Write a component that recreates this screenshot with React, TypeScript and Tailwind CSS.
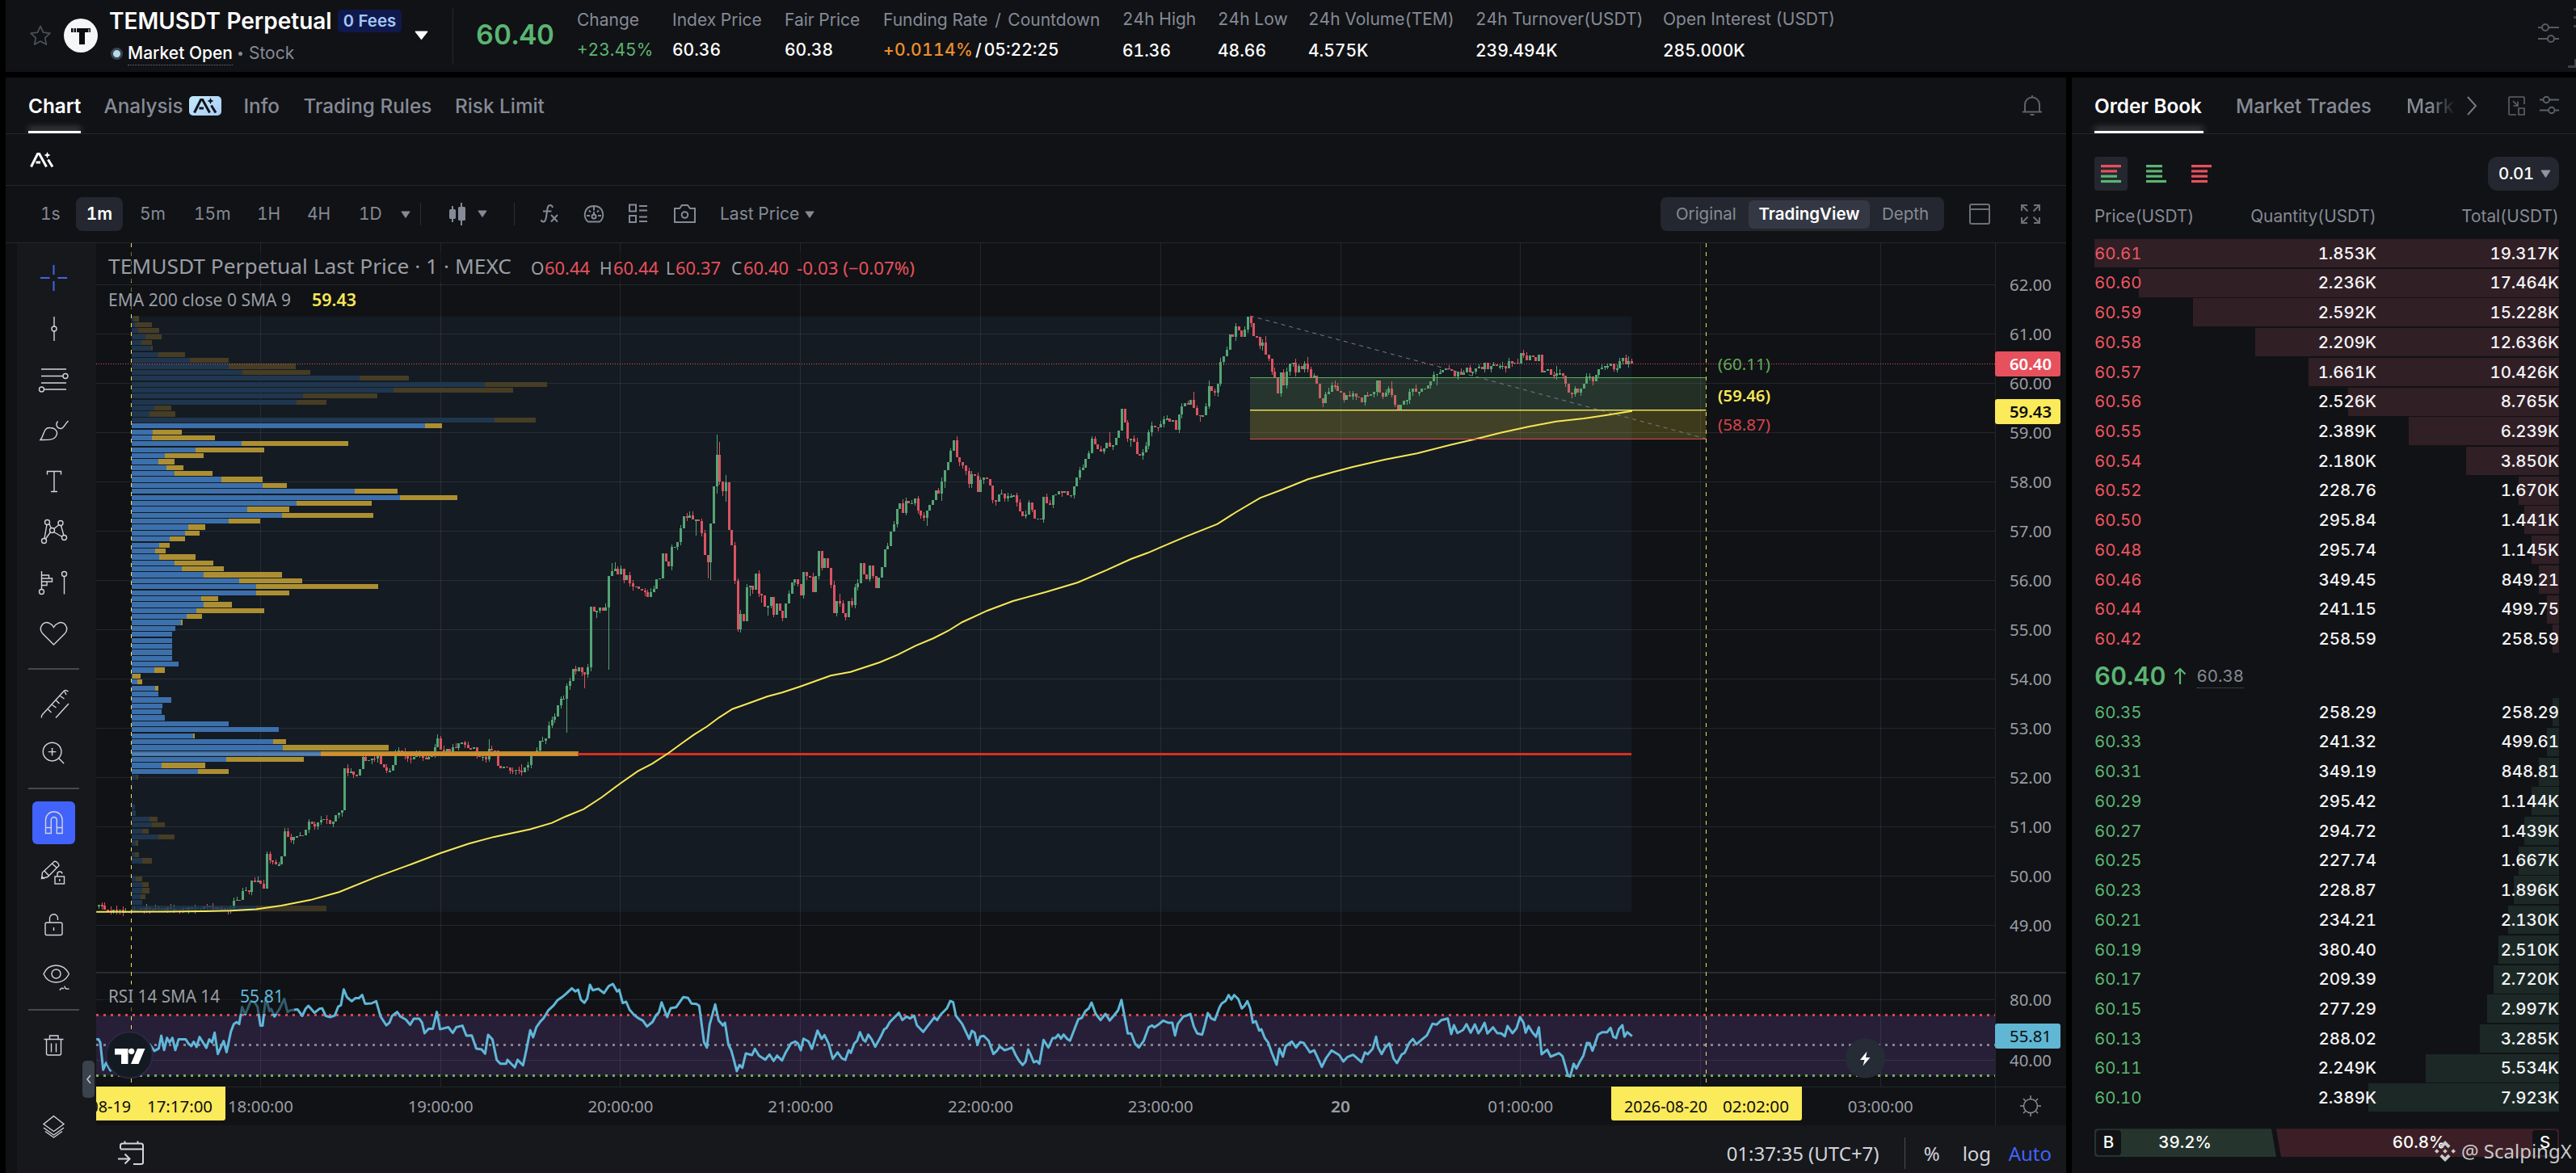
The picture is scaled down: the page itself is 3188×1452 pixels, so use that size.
import type { ReactNode } from 'react';
import { ZoomIn } from 'lucide-react';
import clsx from 'clsx';

// ── Chart geometry ────────────────────────────────────────────────────────

const X0 = 322.4;        // 18:00
const MINUTE = 3.7128;
const HOUR = MINUTE * 60;
const PANE_LEFT = 119;
const PANE_RIGHT = 2469;

type Pt = [number, number];

const priceY = (p: number) => 352.5 + (62 - p) * 61;

// Traces are stored on a finer grid than the canvas, scale them back down
function trace(ox: number, oy: number, sx: number, sy: number, raw: string): Pt[] {
  return raw.trim().split(/\s+/).map(s => {
    const [x, y] = s.split(',').map(Number);
    return [ox + x / sx, oy + y / sy];
  });
}

const toPath = (pts: Pt[]) => 'M' + pts.map(p => `${p[0].toFixed(1)} ${p[1].toFixed(1)}`).join('L');

const PRICE: Pt[] = [
  ...trace(0, 860, 2.24, 2.649, `
    270,690 280,692 288,705 300,706 320,708 345,710 370,704 390,700 420,702 450,700 480,703 510,700 540,701 570,697
    600,698 612,704 640,703 648,676 664,673 672,643 688,647 695,610 712,610 720,620 728,635 737,633 740,523 747,543
    755,549 771,557 780,530 788,447 797,467 805,477 813,466 822,464 838,462 843,475 847,443 855,416 863,424 872,432
    880,418 895,407 903,410 911,424 935,421 938,388 945,378 954,242 962,250 967,258 975,252 986,264 995,243
    1004,204 1012,216 1020,214 1035,217 1040,210 1047,200 1055,228 1062,238 1070,250 1080,250 1087,230 1093,210
    1100,190 1110,188 1125,200 1137,213 1145,205 1155,193 1165,190 1180,213 1190,205 1200,198 1206,172 1213,142
    1222,180 1235,178 1245,185 1256,172 1265,175 1275,160 1290,164 1300,176 1312,172 1320,198 1330,205 1345,212
    1355,178 1370,184 1378,234 1390,242 1405,238 1415,248 1430,246 1445,255 1460,262 1465,230 1472,186 1487,182
    1495,152 1510,142 1520,100 1535,72 1545,35 1553,14 1562,12`),
  ...trace(700, 560, 2.24, 3, `
    1,868 10,850 19,804 27,812 35,798 43,815 53,824 60,798 69,574 77,592 85,588 93,577 103,587 110,577 117,460
    127,441 135,432 143,452 151,433 160,475 168,457 177,487 185,499 194,497 202,508 210,514 219,520 227,536 236,519
    243,508 252,472 261,467 268,376 277,404 286,422 293,352 302,350 310,334 318,283 327,238 335,242 343,234 351,250
    360,250 368,254 376,301 384,381 393,407 402,263 409,127 418,10 427,108 434,144 443,112 451,287 460,344 468,478
    476,656 485,600 492,628 500,501 509,496 518,510 526,451 535,525 543,530 551,572 559,570 568,538 577,602 585,560
    593,587 602,614 609,562 617,526 626,484 635,472 643,488 651,530 660,444 668,460 676,462 685,518 693,460 701,367
    709,428 718,394 727,428 735,493 743,597 751,552 759,560 768,597 777,611 784,553 792,568 800,502 810,485 817,411
    826,454 835,470 843,421 851,460 860,503 868,466 876,427 884,360 893,348 900,295 909,268 918,211 926,189 934,224
    942,180 951,190 959,188 967,171 975,216 984,235 992,244 1000,216 1009,196 1017,178 1025,142 1033,152 1042,108
    1050,66 1058,37 1067,-5 1075,-45 1083,18 1092,37 1099,48 1108,70 1117,118 1126,80 1134,86 1142,146 1151,102
    1159,94 1167,100 1175,122 1184,178 1192,184 1200,156 1208,152 1217,170 1225,163 1233,163 1242,160 1249,187
    1258,220 1268,236 1275,230 1283,187 1292,212 1301,245 1309,245 1317,250 1326,165 1334,190 1342,194 1350,160
    1358,155 1366,143 1375,151 1383,143 1391,158 1400,158 1408,127 1416,92 1424,66`),
  ...trace(1300, 360, 1.742, 3, `
    70,656 75,625 81,603 89,550 96,570 103,587 108,597 115,585 122,565 128,580 135,572 141,545 148,520 154,439
    160,490 167,550 173,550 180,560 186,606 195,613 205,576 212,526 217,500 225,506 232,508 238,495 243,476 250,475
    258,485 265,480 270,516 278,458 284,430 290,418 297,422 304,406 308,436 315,461 322,464 330,462 334,428 341,354
    347,372 354,378 360,344 367,265 374,244 380,220 387,163 393,172 399,132 405,146 412,172 418,143 425,97 432,120
    438,168 445,172 451,203 458,192 464,238 470,252 477,300 484,324 490,380 496,304 503,352 510,300 516,270 522,266
    530,302 536,278 541,290 548,270 555,292 561,320 568,316 574,345 580,398 587,418 594,384 600,374 606,352 613,355
    620,371 627,378 633,404 640,388 646,392 652,381 658,392 664,395 670,413 677,388 683,390 690,383 696,376 703,334
    709,378 715,394 722,378 729,364 735,386 741,424 748,440 755,422 762,408 768,405 775,376 781,362 788,376 795,376
    802,364 808,362 815,350 821,336 828,313 835,308 842,304 848,294 855,292 862,296 869,318 877,300 884,312 890,304
    897,286 905,302 911,300 918,288 924,282 930,292 937,268 943,290 950,278 956,274 962,280 969,280 976,278 983,288
    990,262 997,270 1006,270 1013,232 1020,240 1026,258 1033,240 1040,246 1047,260 1053,236 1058,302 1065,298
    1072,292 1078,312 1085,314 1092,306 1098,306 1105,316 1111,344 1117,378 1124,384 1130,362 1137,378 1143,362
    1150,346 1156,318 1163,318 1170,336 1176,312 1182,290 1188,284 1195,280 1202,280 1209,270 1215,290 1222,288
    1229,262 1235,250 1240,274 1247,262 1253,271`),
];

// Wicks that stand out from the noise
const LONG_WICKS: Pt[] = [
  ...trace(700, 560, 2.24, 3, `
    1,1040 53,875 117,806 127,411 135,408 360,308 393,467 402,475 443,84 434,161 443,183 559,605 543,558 759,525
    1000,272 1042,180 777,623 1050,133 85,614 509,533 418,152 418,-66 427,-40`),
  ...trace(1300, 360, 1.742, 3, `
    125,526 308,375 322,486 555,246 735,336 464,168 458,222 341,334 172,578 613,334 832,352 983,302 1098,290
    1130,392 1092,278 1247,243 354,380 976,264`),
  ...trace(0, 860, 2.24, 2.649, '1355,146 1445,228 888,397 1100,183 1287,152 747,514'),
];

interface Candle { x: number; open: number; close: number; hi: number; lo: number }

function buildCandles(): Candle[] {
  const closes = new Map<number, number>();
  const idx = (x: number) => Math.round((x - X0) / MINUTE);
  PRICE.forEach(([x, y]) => closes.set(idx(x), y));
  const keys = [...closes.keys()].sort((a, b) => a - b);
  for (let k = 1; k < keys.length; k++) {
    const [a, b] = [keys[k - 1], keys[k]];
    for (let i = a + 1; i < b; i++) {
      const t = (i - a) / (b - a);
      const wobble = Math.sin(i * 2.7) * 2;
      closes.set(i, closes.get(a)! * (1 - t) + closes.get(b)! * t + wobble);
    }
  }
  const last = keys[keys.length - 1];
  const out: Candle[] = [];
  let open = closes.get(keys[0])!;
  for (let i = keys[0]; i <= last; i++) {
    const close = closes.get(i)!;
    const up = (Math.abs(Math.sin(i * 12.9898)) * 4371) % 1;
    const down = (Math.abs(Math.sin(i * 78.233)) * 4371) % 1;
    out.push({
      x: X0 + i * MINUTE,
      open,
      close,
      hi: Math.min(open, close) - (up > 0.6 ? up * 5 : 0),
      lo: Math.max(open, close) + (down > 0.6 ? down * 5 : 0),
    });
    open = close;
  }
  LONG_WICKS.forEach(([x, y]) => {
    const c = out[idx(x) - keys[0]];
    if (!c) return;
    c.hi = Math.min(c.hi, y);
    c.lo = Math.max(c.lo, y);
  });
  return out;
}

const CANDLES = buildCandles();

const EMA: Pt[] = [
  ...trace(0, 860, 2.24, 2.649, `
    267,712 465,711 560,710 640,708 710,703 780,691 860,673 940,647 1040,599 1130,560 1220,520 1300,488 1370,466
    1470,441 1530,420`),
  ...trace(700, 560, 2.24, 3, `
    0,1352 50,1325 100,1281 151,1230 200,1184 240,1156 285,1117 320,1082 355,1049 392,1018 425,985 462,953 500,935
    560,906 600,892 651,869 735,829 790,815 870,780 920,752 970,718 1020,690 1060,663 1100,630 1170,587 1240,552
    1330,519 1420,483 1500,437 1567,396`),
  ...trace(1300, 360, 1.742, 3, `
    210,973 238,952 290,914 360,866 400,822 452,769 500,738 555,700 610,673 650,655 720,627 790,604 860,573 920,549
    970,527 1030,505 1090,485 1150,474 1200,461 1254,446`),
];

const RSI: Pt[] = [
  ...trace(0, 860, 2.24, 2.649, `
    267,1130 273,1130 278,1140 286,1230 294,1207 306,1232 330,1190 370,1160 400,1150 415,1147 428,1168 440,1160
    447,1118 455,1165 463,1125 470,1140 478,1125 486,1165 495,1130 515,1130 523,1145 530,1152 537,1138 545,1155
    553,1122 560,1135 572,1158 580,1130 588,1140 595,1108 604,1178 620,1135 628,1172 640,1105 648,1080 656,1073
    663,1080 671,1024 680,1048 695,1005 705,1008 714,1023 722,1085 728,1085 737,992 747,1037 752,1030 761,1055
    775,1030 788,997 797,1040 805,1035 815,1033 825,1032 838,1053 847,1030 855,1020 872,1043 885,1030 893,1028
    903,1053 915,1057 928,1052 938,1022 945,1018 953,966 962,992 975,1005 985,995 995,995 1004,984 1012,1013
    1030,1012 1043,1005 1055,1055 1071,1084 1080,1075 1087,1053 1101,1040 1110,1055 1125,1065 1137,1082 1147,1062
    1162,1062 1170,1075 1177,1110 1188,1095 1200,1095 1211,1040 1220,1097 1243,1090 1255,1109 1265,1090 1282,1085
    1293,1118 1308,1117 1320,1160 1335,1163 1345,1177 1353,1115 1365,1130 1377,1197 1387,1210 1403,1210 1407,1197
    1417,1210 1427,1222 1435,1197 1450,1215 1460,1160 1470,1100 1478,1123 1487,1090 1497,1073 1507,1060 1520,1035
    1535,1018 1545,1002 1560,990`),
  ...trace(700, 1180, 1.1615, 3, `
    0,152 9,130 14,142 18,135 22,172 27,184 31,168 35,117 39,137 47,132 55,148 62,122 68,114 74,142 77,135 82,185
    87,180 92,210 98,228 105,242 111,250 117,272 125,255 130,230 134,220 138,182 146,237 151,204 159,200 169,163
    176,166 181,187 188,188 192,195 199,330 203,350 207,265 215,190 220,250 226,268 229,258 234,340 238,360 242,398
    246,438 250,415 254,425 259,372 268,378 272,355 278,380 287,395 293,376 299,400 304,380 311,398 316,370 324,335
    330,328 334,335 338,360 342,317 349,327 354,355 362,287 368,318 372,304 378,335 384,392 391,368 397,390 402,396
    407,360 410,370 415,335 419,325 423,293 428,322 431,328 435,302 440,320 445,347 453,310 458,282 461,278 466,256
    474,235 479,221 484,248 490,235 495,242 501,232 505,268 514,292 522,265 530,238 534,248 539,228 548,205 553,177
    557,182 561,232 570,262 576,295 580,318 584,288 588,295 592,340 596,310 601,307 608,325 615,374 620,362 624,346
    631,360 637,355 642,350 647,378 652,400 657,415 661,403 665,357 669,380 673,405 677,400 681,410 687,322 694,350
    700,315 704,315 708,302 712,317 716,302 721,318 725,325 732,278 737,245 742,240 747,215 752,205 756,183 762,225
    769,248 776,225 782,250 788,232 794,212 799,173 808,298 813,298 819,338 824,350 831,325 838,275 843,268 846,275
    853,263 859,250 866,258 872,258 876,305 880,262 888,235 894,230 898,225 903,272 908,298 915,302 919,265 923,222
    928,242 933,248 940,200 943,187 949,176 953,155 957,172 961,155 967,170 972,205 976,195 980,178 984,205 988,258
    992,252 997,287 1000,282 1005,315 1010,332 1015,370 1022,414 1026,354 1031,384 1035,345 1044,328 1050,350
    1056,330 1061,333 1070,368 1076,360 1081,388 1087,422 1093,390 1101,361 1112,378 1118,402 1124,385 1132,377
    1144,404 1149,368 1153,375 1160,355 1165,310 1168,350 1173,374 1178,350 1184,335 1190,390 1195,408 1202,375
    1206,370 1213,332 1218,318 1223,338 1230,322 1238,305 1246,262 1252,265 1259,248 1268,242 1273,300 1277,267
    1282,296 1290,285 1295,263 1301,295 1307,264 1312,297 1316,283 1321,258 1325,298 1333,275 1339,296 1345,298
    1350,308 1354,270 1361,297 1367,278 1372,237 1377,258 1380,295 1384,270 1390,295 1395,310 1399,275 1403,375
    1411,358 1416,384 1428,371 1433,382 1437,418 1441,455 1444,458 1449,410 1453,428 1458,402 1463,380 1468,333
    1472,334 1476,362 1484,302 1490,293 1497,293 1502,277 1506,310 1510,315 1514,282 1519,267 1522,310 1526,293
    1533,308`),
];

// Volume profile: [up volume, total volume] per price row, top to bottom
const PROFILE: Pt[] = `
  7,22 9,56 18,78 40,85 29,58 54,60 76,150 163,271 269,455 307,497 632,770 981,1153 726,1059 475,681 459,540 63,110
  51,123 1006,1120 815,862 60,139 56,231 305,602 179,369 92,201 76,119 98,145 119,226 249,365 363,432 620,737 744,903
  459,667 322,439 417,670 269,358 159,204 148,190 107,148 78,107 65,96 78,179 119,228 141,257 201,417 298,473
  347,685 347,437 193,240 201,278 181,369 154,197 137,143 123,123 114,114 114,114 114,114 114,114 114,114 130,130
  63,92 4,25 16,31 67,76 74,74 110,110 87,87 85,85 92,92 269,269 408,408 172,175 392,428 421,714 526,1239 264,479
  83,206 184,269 15,20 3,3 3,3 2,2 3,3 10,10 13,13 51,72 58,94 31,49 74,119 13,20 2,2 9,22 31,56 2,2 1,1 13,31 31,49
  31,51 25,40 31,31 347,542`
  .trim().split(/\s+/).map(s => s.split(',').map(n => Number(n) / 2.24) as Pt);

const ROW = 7.374;

interface LabelProps {
  x: number;
  y: number;
  w?: number;
  size?: number;
  fill?: string;
  bold?: boolean;
  anchor?: 'start' | 'middle' | 'end';
  children: ReactNode;
}

function Label({ x, y, w, size = 20, fill = '#9a9da5', bold, anchor = 'start', children }: LabelProps) {
  return (
    <text
      x={x}
      y={y + size * 0.357}
      fontSize={size}
      fill={fill}
      fontWeight={bold ? 600 : 400}
      textAnchor={anchor}
      textLength={w}
      lengthAdjust="spacingAndGlyphs"
    >
      {children}
    </text>
  );
}

function Chart() {
  const hours = Array.from({ length: 10 }, (_, i) => X0 + i * HOUR);
  const prices = Array.from({ length: 14 }, (_, i) => 62 - i);
  const times = ['18:00:00', '19:00:00', '20:00:00', '21:00:00', '22:00:00', '23:00:00', '20', '01:00:00', '', '03:00:00'];

  return (
    <svg width={2438} height={1092} viewBox="119 301 2438 1092" className="block font-['Noto_Sans',sans-serif]">
      <rect x={162.5} y={391.4} width={1857} height={737.4} fill="#151b22" />
      <rect x={PANE_LEFT} y={1256.5} width={2350} height={75} fill="#271f37" />

      {/* Grid */}
      <g stroke="#96a0be" strokeOpacity={0.14} strokeWidth={1} shapeRendering="crispEdges">
        {prices.map(p => <line key={p} x1={PANE_LEFT} x2={PANE_RIGHT} y1={priceY(p)} y2={priceY(p)} />)}
        {hours.map(x => <line key={x} x1={x} x2={x} y1={301} y2={1345} />)}
        <line x1={PANE_LEFT} x2={PANE_RIGHT} y1={1237.5} y2={1237.5} />
        <line x1={PANE_LEFT} x2={PANE_RIGHT} y1={1312.5} y2={1312.5} />
        <line x1={PANE_RIGHT + 0.5} x2={PANE_RIGHT + 0.5} y1={301} y2={1393} />
        <line x1={PANE_LEFT} x2={2557} y1={1345.5} y2={1345.5} />
      </g>
      <rect x={PANE_LEFT} y={1203} width={2438} height={2} fill="#292b32" />

      {/* Candles */}
      <g shapeRendering="crispEdges">
        {CANDLES.map((c, i) => (
          <g key={i} fill={c.close <= c.open ? '#53a574' : '#db5363'}>
            <rect x={Math.round(c.x)} y={c.hi} width={1} height={c.lo - c.hi} />
            <rect x={Math.round(c.x) - 1} y={Math.min(c.open, c.close)} width={3} height={Math.max(1.5, Math.abs(c.close - c.open))} />
          </g>
        ))}
      </g>

      {/* Volume profile */}
      <g shapeRendering="crispEdges">
        {PROFILE.map(([up, total], i) => {
          const inArea = i >= 18 && i <= 76;
          const y = 391.4 + i * ROW;
          return (
            <g key={i} opacity={i > 98 ? 0.8 : 1}>
              <rect x={162.5} y={y} width={up} height={6.2} fill={inArea ? '#3c70ac' : '#1f364e'} />
              <rect x={162.5 + up} y={y} width={total - up} height={6.2} fill={inArea ? '#ad8f33' : '#463d25'} />
            </g>
          );
        })}
        <rect x={715} y={932} width={1304} height={3} fill="#d8301f" />
        <rect x={397} y={932} width={318} height={3} fill="#df8a2d" />
        <rect x={162.5} y={932} width={234} height={3} fill="#5a80a8" />
      </g>

      <path d={toPath(EMA)} fill="none" stroke="#f7e857" strokeWidth={2} />

      {/* Fib zones */}
      <rect x={1547} y={467} width={564.5} height={40} fill="#6fa563" fillOpacity={0.2} />
      <rect x={1547} y={507} width={564.5} height={36} fill="#f1dc3c" fillOpacity={0.2} />
      <line x1={1547} y1={391} x2={2111} y2={543} stroke="#787b86" strokeWidth={1} strokeDasharray="5 5" />
      <rect x={1547} y={467} width={564.5} height={1} fill="#58b056" />
      <rect x={1547} y={507} width={564.5} height={1.4} fill="#f7e857" />
      <rect x={1547} y={543} width={564.5} height={1} fill="#d9484f" />
      <Label x={2126} y={450.5} w={65} fill="#5eac5b">(60.11)</Label>
      <Label x={2126} y={490} w={65} fill="#f7e857" bold>(59.46)</Label>
      <Label x={2126} y={526} w={65} fill="#d8444c">(58.87)</Label>

      <line x1={PANE_LEFT} x2={PANE_RIGHT} y1={450.5} y2={450.5} stroke="#e6515d" strokeDasharray="1 2" />

      {/* RSI */}
      <g strokeWidth={3} strokeDasharray="3 6">
        <line x1={119} x2={2469} y1={1256.5} y2={1256.5} stroke="#d9484f" />
        <line x1={119} x2={2469} y1={1293.5} y2={1293.5} stroke="#84828c" />
        <line x1={119} x2={2469} y1={1331.5} y2={1331.5} stroke="#6cb05a" />
      </g>
      <path d={toPath(RSI)} fill="none" stroke="#5fb7d8" strokeWidth={3} strokeLinejoin="round" />

      {/* Range anchors */}
      <g stroke="#f1e25a" strokeWidth={1} strokeDasharray="5 6" shapeRendering="crispEdges">
        <line x1={162.5} x2={162.5} y1={301} y2={1345} />
        <line x1={2111.5} x2={2111.5} y1={301} y2={1345} />
      </g>

      {/* Legends */}
      <g fill="#111215" fillOpacity={0.55}>
        <rect x={127} y={311} width={1012} height={38} />
        <rect x={127} y={356} width={326} height={33} />
        <rect x={127} y={1218} width={237} height={37} />
      </g>
      <Label x={134} y={329.5} w={499} size={26}>TEMUSDT Perpetual Last Price · 1 · MEXC</Label>
      <Label x={657} y={333} size={21}>O</Label>
      <Label x={674} y={333} w={56} size={21} fill="#e6515d">60.44</Label>
      <Label x={742} y={333} size={21}>H</Label>
      <Label x={759} y={333} w={56} size={21} fill="#e6515d">60.44</Label>
      <Label x={824} y={333} size={21}>L</Label>
      <Label x={836} y={333} w={56} size={21} fill="#e6515d">60.37</Label>
      <Label x={905} y={333} size={21}>C</Label>
      <Label x={920} y={333} w={56} size={21} fill="#e6515d">60.40</Label>
      <Label x={986} y={333} w={146} size={21} fill="#e6515d">-0.03 (−0.07%)</Label>
      <Label x={134} y={372} w={226} size={21}>EMA 200 close 0 SMA 9</Label>
      <Label x={386} y={372} w={55} size={21} fill="#f7e857" bold>59.43</Label>
      <Label x={134} y={1234} w={138} size={21}>RSI 14 SMA 14</Label>
      <Label x={297} y={1234} w={54} size={21} fill="#5fb7d8">55.81</Label>

      {/* Price axis */}
      {prices.map(p => <Label key={p} x={2487} y={priceY(p)} w={52}>{p.toFixed(2)}</Label>)}
      <Label x={2487} y={1237.5} w={52}>80.00</Label>
      <Label x={2487} y={1312.5} w={52}>40.00</Label>
      <rect x={2469} y={435} width={81} height={31} rx={3} fill="#e6515d" />
      <Label x={2487} y={450.5} w={52} fill="#fff" bold>60.40</Label>
      <rect x={2469} y={494} width={81} height={31} rx={3} fill="#fbea5a" />
      <Label x={2487} y={509.5} w={52} fill="#0c0d10" bold>59.43</Label>
      <rect x={2469} y={1267} width={81} height={31} rx={3} fill="#5fb7d4" />
      <Label x={2487} y={1282.5} w={52} fill="#0c0d10">55.81</Label>

      {/* Time axis */}
      {times.map((t, i) => t && (
        <Label key={i} x={hours[i]} y={1370} w={t === '20' ? 24 : 81} anchor="middle" bold={t === '20'}>{t}</Label>
      ))}
      <path d="M119 1345h160v39a3 3 0 0 1-3 3H119z" fill="#fbea5a" />
      <Label x={59} y={1370} w={103} fill="#0c0d10">2026-08-19</Label>
      <Label x={182} y={1370} w={81} fill="#0c0d10">17:17:00</Label>
      <path d="M1994 1345h236v39a3 3 0 0 1-3 3h-230a3 3 0 0 1-3-3z" fill="#fbea5a" />
      <Label x={2010} y={1370} w={103} fill="#0c0d10">2026-08-20</Label>
      <Label x={2132} y={1370} w={82} fill="#0c0d10">02:02:00</Label>

      {/* Axis settings */}
      <g stroke="#8b8e96" strokeWidth={1.5} fill="none">
        <circle cx={2513} cy={1369} r={8.5} />
        <path d="M2513 1356v4M2513 1378v4M2500 1369h4M2522 1369h4M2504 1360l2.5 2.5M2519.5 1375.5l2.5 2.5M2504 1378l2.5-2.5M2519.5 1362.5l2.5-2.5" />
      </g>

      {/* TradingView mark */}
      <circle cx={160} cy={1306} r={28.5} fill="#141a21" stroke="#2d2a49" strokeWidth={1.5} />
      <g fill="#fff">
        <path d="M142 1298h16.500v19h-8.500v-11.500h-8z" />
        <circle cx={162.7} cy={1301.3} r={3.6} />
        <path d="M170 1298h9.500l-8 19h-9.500z" />
      </g>
      <circle cx={2308.5} cy={1310} r={24.5} fill="#262c36" />
      <path d="M2310.500 1301.500l-8.500 10.500h5.500l-2 7.500 9-10.500h-5.500z" fill="#fff" />
    </svg>
  );
}

// ── Icons ─────────────────────────────────────────────────────────────────

function Glyph({ children, size = 40, className }: { children: ReactNode; size?: number; className?: string }) {
  return (
    <svg
      width={size}
      height={size}
      viewBox={`0 0 ${size} ${size}`}
      fill="none"
      stroke="currentColor"
      strokeWidth={1.4}
      className={clsx('shrink-0', className)}
    >
      {children}
    </svg>
  );
}

function Caret({ className }: { className?: string }) {
  return (
    <svg width="14" height="10" viewBox="0 0 14 10" preserveAspectRatio="none" fill="currentColor" className={clsx('shrink-0', className)}>
      <path d="M1 1h12L7 9.500z" stroke="currentColor" strokeLinejoin="round" />
    </svg>
  );
}

function Sliders({ className }: { className?: string }) {
  return (
    <svg width="28" height="28" viewBox="0 0 28 28" fill="none" stroke="currentColor" strokeWidth="2" className={className}>
      <path d="M1 7h5M14 7h13M1 21h12M21 21h6" />
      <circle cx="10" cy="7" r="4" />
      <circle cx="17" cy="21" r="4" />
    </svg>
  );
}

function AiMark() {
  return (
    <svg width="30" height="20" viewBox="0 0 30 20" fill="none" stroke="currentColor" strokeWidth="3" className="shrink-0">
      <path d="M1.500 18.500L9.500 2.500h2.200L20.500 18.500M7.500 13h5.500M22.500 9.500l5.500 9" />
      <path d="M21.500 0l1.200 2.800 2.800 1.200-2.800 1.200L21.500 8l-1.200-2.800L17.500 4l2.800-1.200z" fill="currentColor" stroke="none" />
    </svg>
  );
}

const TOOLS_DRAW: ReactNode[] = [
  <g stroke="#3f66e8" strokeWidth={2}><path d="M20.500 4v12M20.500 24v12M4 20h11.500M25.500 20H37" /></g>,
  <><path d="M21 5v12M21 23v12" /><circle cx="21" cy="20" r="3" /></>,
  <><path d="M5 7h31M5 15.500h27M5 24h31M9 32h27" /><circle cx="35" cy="15.500" r="3" /><circle cx="5.500" cy="32" r="3" /></>,
  <path d="M4 31.500C9 26 7.500 16 15.500 16.500c7 0 11 5 8 10C21 32 14 31.500 4 31.500zM25.500 8.500C22 13 25 18 30 17.500 32.500 17 34 12.500 38.500 8" />,
  <path d="M12.500 11.500v-4h17v4M21 7.500v25M17 32.500h8" />,
  <>
    <path d="M12 11L9 28.500M15 10.500l2.500 5.500M21 16.500l6-5M29.500 12.500l3.500 12.500M20.500 20.500l10.500 6M16.500 20.500l-6 8.500" />
    <circle cx="12.500" cy="8.500" r="3" /><circle cx="29" cy="9.500" r="3" /><circle cx="8.500" cy="31.500" r="3" />
    <circle cx="33.500" cy="27.500" r="3" /><circle cx="18.500" cy="18.500" r="3" />
  </>,
  <>
    <path d="M5.500 6v22.500M5.500 11h9v4M5.500 15h13v4h-13M5.500 23.500h6.500V19M33.500 12.500v22" />
    <circle cx="5.500" cy="31.500" r="3" /><circle cx="33.500" cy="9.500" r="3" />
  </>,
  <path d="M20.500 34L7 20.500C0.500 13.500 7.500 4 14.500 7.200c3 1.300 5 3.300 6 5.300 1-2 3-4 6-5.300C33.500 4 40.500 13.500 34 20.500z" />,
];

const RULER = (
  <path d="M5.500 37.500c-.5-2 0-3 1-4L33 4.500c1.500-1.500 3-1.500 5.500.5M23 37.500L39 20M13.500 27l4 4M18.500 21.500l5 3.500M23.500 16l4 4M28.500 10.500l5 3.500M34 5l2 4" />
);
const MAGNET = <path d="M10.500 33.500V17a10.300 10.300 0 0 1 20.600 0v16.500h-6.800V17a3.500 3.500 0 0 0-7 0v16.500zM10.500 26.500h6.800M24.300 26.500h6.800" />;
const PENCIL_LOCK = (
  <>
    <path d="M5.500 27.500l1-7.500L21 6.500c2-1 6 2 6 5L13 25.500zM18.500 9l6 5.500M9 18l5.500 6M6 25l3 3" />
    <rect x="22" y="25" width="11.500" height="9" /><path d="M25 25v-2.500a3 3 0 0 1 6-1M27.800 28v3" />
  </>
);
const UNLOCK = <><rect x="10" y="19" width="21" height="15.500" rx="2" /><path d="M15.500 19v-5a5 5 0 0 1 10-.5V16M20.500 25v4" /></>;
const EYE = (
  <>
    <path d="M8 19.500C14 5.500 32.500 5.500 39.500 19.500 32.500 33.500 14 33.500 8 19.500z" /><circle cx="23.500" cy="19.500" r="5.500" />
    <path d="M28 40c1-3 3-3.500 5-2M34 34.500c0 3 1.500 4 5.500 3.500" />
  </>
);
const TRASH = <path d="M8.500 12.500h24M15.500 12.500V8h10.500v4.500M11.500 12.500v17.500q0 2 2 2h14q2 0 2-2V12.500M17.500 17.500v11M23.500 17.500v11" />;
const LAYERS = <path d="M20.500 6.500L33 16.500l-12.500 9L8 16.500zM8 21l12.500 9L33 21M10 25.500l10.500 7.500L31 25.500" />;

function Tool({ children }: { children: ReactNode }) {
  return <button className="flex h-[62.8px] shrink-0 items-center justify-center"><Glyph>{children}</Glyph></button>;
}

const Rule = () => <div className="h-0.5 w-[63px] shrink-0 bg-[#46484d]" />;

function DrawingBar() {
  return (
    <div className="flex h-full w-[98px] shrink-0 flex-col items-center bg-[#17181c] pr-2 pt-3 text-[#d1d4dc]">
      {TOOLS_DRAW.map((t, i) => <Tool key={i}>{t}</Tool>)}
      <div className="h-[11.5px] shrink-0" />
      <Rule />
      <div className="h-[11px] shrink-0" />
      <Tool>{RULER}</Tool>
      <button className="flex h-[59px] shrink-0 items-center justify-center"><ZoomIn size={34} strokeWidth={1} /></button>
      <div className="h-[13px] shrink-0" />
      <Rule />
      <button className="mt-[15px] flex h-[53px] w-[53px] shrink-0 items-center justify-center rounded-md bg-[#4163fb]">
        <Glyph>{MAGNET}</Glyph>
      </button>
      <div className="h-[4px] shrink-0" />
      <Tool>{PENCIL_LOCK}</Tool>
      <Tool>{UNLOCK}</Tool>
      <Tool>{EYE}</Tool>
      <div className="h-[12px] shrink-0" />
      <Rule />
      <div className="h-[12px] shrink-0" />
      <Tool>{TRASH}</Tool>
      <div className="h-[38px] shrink-0" />
      <Tool>{LAYERS}</Tool>
    </div>
  );
}

// ── Header ────────────────────────────────────────────────────────────────

function Stat({ label, className, children }: { label: ReactNode; className: string; children: ReactNode }) {
  return (
    <div className={clsx('shrink-0 whitespace-nowrap text-[21px] leading-[26px]', className)}>
      <div className="text-[#858a96]">{label}</div>
      <div className="font-medium text-white">{children}</div>
    </div>
  );
}

function Header() {
  return (
    <header className="relative ml-[7px] flex h-[89px] shrink-0 bg-[#111215]">
      <svg width="28" height="28" viewBox="0 0 24 24" fill="none" stroke="#4c5058" strokeWidth="1.500" strokeLinejoin="round" className="ml-[29px] mt-[30px] shrink-0">
        <path d="M12 2l3 6.600 7.200.9-5.300 4.900 1.400 7.100-6.300-3.500-6.300 3.500 1.400-7.100L1.800 9.500 9 8.600z" />
      </svg>
      <div className="ml-[15px] mt-[23px] flex size-[42px] shrink-0 items-center justify-center rounded-full bg-[#f5f6f8]">
        <svg width="24" height="22" viewBox="0 0 24 22" fill="#0b0c0e" className="mt-[2px]">
          <path d="M0 1h2.500v5H0zM3.500 1H6v5H3.500zM7 1h17v5h-1.500V2h-1v4H17v15h-7V6H7z" />
        </svg>
      </div>
      <div className="ml-[14px] flex w-[362px] shrink-0 flex-col">
        <div className="mt-[10px] flex h-[32px] items-center whitespace-nowrap">
          <span className="text-[28px] font-semibold text-white">TEMUSDT Perpetual</span>
          <span className="ml-[7px] flex h-[28px] items-center rounded-[5px] bg-[#10194d] px-[7px] text-[20.5px] font-semibold text-[#a3c8f5]">0 Fees</span>
        </div>
        <div className="mt-[9px] flex h-[30px] items-center whitespace-nowrap text-[21px]">
          <span className="ml-[2px] mr-[6px] size-[15px] rounded-full border-[3px] border-[#3a4750] bg-[#b9d9ea]" />
          <span className="border-b border-dotted border-[#6b7079] font-medium leading-[29px] text-white">Market Open</span>
          <span className="ml-[7px] size-[5px] rounded-full bg-[#858a96]" />
          <span className="ml-[8px] text-[#858a96]">Stock</span>
        </div>
      </div>
      <Caret className="ml-[16px] mt-[38px] h-[11px] w-[17px] text-white" />
      <div className="ml-[30px] mt-[9px] h-[70px] w-px shrink-0 bg-[#24272f]" />
      <div className="ml-[28px] mt-[22px] w-[125px] shrink-0 text-[34px] font-semibold leading-[42px] text-[#5ab573]">60.40</div>
      <Stat label="Change" className="mt-[12px] w-[118px] space-y-[11px]"><span className="font-normal text-[#5ab573]">+23.45%</span></Stat>
      <Stat label="Index Price" className="mt-[12px] w-[139px] space-y-[11px]">60.36</Stat>
      <Stat label="Fair Price" className="mt-[12px] w-[122px] space-y-[11px]">60.38</Stat>
      <Stat
        label={<>Funding Rate <span className="mx-[3px]">/</span> Countdown</>}
        className="mt-[12px] w-[296px] space-y-[11px]"
      >
        <span className="inline-block w-[114px] tracking-[0.4px] text-[#ec8f2e]">+0.0114%</span>/
        <span className="ml-[3px]">05:22:25</span>
      </Stat>
      <Stat label="24h High" className="mt-[11px] w-[118px] space-y-[13px]">61.36</Stat>
      <Stat label="24h Low" className="mt-[11px] w-[112px] space-y-[13px]">48.66</Stat>
      <Stat label="24h Volume(TEM)" className="mt-[11px] w-[207px] space-y-[13px]">4.575K</Stat>
      <Stat label="24h Turnover(USDT)" className="mt-[11px] w-[232px] space-y-[13px]">239.494K</Stat>
      <Stat label="Open Interest (USDT)" className="mt-[11px] w-[300px] space-y-[13px]">285.000K</Stat>
      <Sliders className="ml-auto mr-[20px] mt-[27px] shrink-0 text-[#565a63]" />
      {/* scroll stubs peeking in from the right edge */}
      <div className="absolute right-0 top-[10px] h-[3px] w-[3px] bg-[#3d4148]" />
      <div className="absolute right-0 top-[20px] h-[3px] w-[3px] bg-[#3d4148]" />
      <div className="absolute right-0 top-[31px] h-[3px] w-[3px] bg-[#3d4148]" />
      <div className="absolute right-0 top-[73px] h-[11px] w-[10px] border-b-[3px] border-r-[2px] border-[#3d4148]" />
    </header>
  );
}

// ── Chart panel ───────────────────────────────────────────────────────────

function Tab({ active, className, children }: { active?: boolean; className?: string; children: ReactNode }) {
  return (
    <div className={clsx('flex h-full shrink-0 flex-col whitespace-nowrap text-[24.3px]', className)}>
      <div className={clsx('flex flex-1 items-center pt-[4px]', active ? 'font-semibold text-white' : 'font-medium text-[#858a96]')}>
        {children}
      </div>
      <div className={clsx('h-[3px]', active && 'bg-white shadow-[0_-3px_8px_rgba(255,255,255,0.45)]')} />
    </div>
  );
}

function ChartPanel() {
  return (
    <section className="flex h-full w-[2550px] shrink-0 flex-col bg-[#111215]">
      <div className="flex h-[70px] shrink-0 overflow-hidden border-b border-[#24262c] pl-[28px]">
        <Tab active className="w-[93.5px] [&>div:last-child]:w-[65px]">Chart</Tab>
        <Tab className="w-[173px]">
          Analysis
          <span className="ml-[7px] flex h-[24px] w-[40px] items-center justify-center rounded-[5px] bg-linear-to-br from-[#c4e9fb] to-[#a9cdf8] text-[#111215]">
            <AiMark />
          </span>
        </Tab>
        <Tab className="w-[74px]">Info</Tab>
        <Tab className="w-[187.5px]">Trading Rules</Tab>
        <Tab>Risk Limit</Tab>
        <Glyph size={30} className="ml-auto mr-[27px] mt-[20px] text-[#5d616a]">
          <g strokeWidth={2}><path d="M3 22.500h24M6 22V13.500a9 9 0 0 1 18 0V22M15 4.500V2M12.500 26h5" /></g>
        </Glyph>
      </div>

      <div className="flex h-[64px] shrink-0 items-center border-b border-[#24262c] pl-[30px] text-white"><AiMark /></div>

      <div className="flex h-[71px] shrink-0 items-center border-b border-[#24262c] whitespace-nowrap text-[21px] text-[#858a96]">
        <span className="ml-[43px] w-[44px]">1s</span>
        <span className="flex h-[42px] w-[58px] items-center justify-center rounded-lg bg-[#24272f] font-semibold text-white">1m</span>
        <span className="ml-[21px] w-[67px]">5m</span>
        <span className="w-[78px]">15m</span>
        <span className="w-[62px]">1H</span>
        <span className="w-[64px]">4H</span>
        <span className="w-[52px]">1D</span>
        <Caret className="h-[9px] w-[12px]" />
        <div className="ml-[12px] h-[28px] w-px bg-[#2a2d34]" />
        <svg width="22" height="28" viewBox="0 0 22 28" fill="currentColor" className="ml-[34px]">
          <path d="M1 9.500q0-1.500 1.500-1.500H4V4h2v4h1.500Q9 8 9 9.500v9Q9 20 7.500 20H6v4H4v-4H2.500Q1 20 1 18.500zM12 6.500Q12 5 13.500 5H15V0h2v5h2.500Q21 5 21 6.500v14q0 1.500-1.500 1.500H17v6h-2v-6h-1.500Q12 22 12 20.500z" />
        </svg>
        <Caret className="ml-[14px] mt-[-2px] h-[9px] w-[12px]" />
        <div className="ml-[33px] h-[28px] w-px bg-[#2a2d34]" />
        <Glyph size={28} className="ml-[28px]">
          <g strokeWidth={2}><path d="M19 6C18 2 13.500 1.500 12.500 7L11 17.500C10.300 22 9 23.500 7.500 23.500S5 23 5 21M7 10.500h10.500M17 15l8 8.500M25 15l-8 8.500" /></g>
        </Glyph>
        <Glyph size={28} className="ml-[28px]">
          <g strokeWidth={2}>
            <path d="M7 23.500C-0.500 18 2 4 14 4s14.500 14 7 19.500zM14 5v4.500M8 9.500l2 2M20 9.500l-2 2M5 16h4M19 16h4M14 14v-3" />
            <circle cx="14" cy="17" r="2.500" />
          </g>
        </Glyph>
        <Glyph size={28} className="ml-[26px]">
          <g strokeWidth={2}><path d="M4 2.500h8v8H4zM4 16h8v8H4zM16 4h10M16 9.500h10M16 17.500h10M16 23h10" /></g>
        </Glyph>
        <Glyph size={30} className="ml-[29px]">
          <g strokeWidth={2}><path d="M3 8h6l3-4h7l3 4h6v17H3z" /><circle cx="15.500" cy="16" r="3.800" /></g>
        </Glyph>
        <span className="ml-[29px]">Last Price</span>
        <Caret className="ml-[7px] h-[9px] w-[12px]" />

        <div className="ml-auto flex h-[42px] w-[351px] shrink-0 items-center rounded-lg bg-[#24272f] p-[4px] text-[20.5px]">
          <span className="w-[105px] text-center">Original</span>
          <span className="flex h-[35px] w-[151px] items-center justify-center rounded-md bg-[#343844] font-semibold text-white">TradingView</span>
          <span className="w-[88px] text-center">Depth</span>
        </div>
        <Glyph size={28} className="ml-[30px] text-[#6c7079]">
          <g strokeWidth={2}><rect x="2" y="2" width="24" height="24" rx="2" /><path d="M2 8h24" /></g>
        </Glyph>
        <Glyph size={28} className="ml-[35px] mr-[30px] text-[#6c7079]">
          <g strokeWidth={2}><path d="M3 10V3h7M18 3h7v7M25 18v7h-7M10 25H3v-7M3 3l7.500 7.500M25 3l-7.500 7.500M25 25l-7.500-7.500M3 25l7.500-7.500" /></g>
        </Glyph>
      </div>

      <div className="relative flex min-h-0 flex-1 pl-[14px]">
        <DrawingBar />
        <div className="flex flex-1 flex-col">
          <Chart />
          <div className="flex flex-1 items-center bg-[#17181c] pt-[10px] whitespace-nowrap font-['Noto_Sans',sans-serif] text-[24px] leading-[32px] text-[#d1d4dc]">
            <Glyph className="ml-[23px]">
              <path d="M7 14V10q0-2.500 2.500-2.500h23q2.500 0 2.500 2.500v21q0 2-2.500 2H23M7 14.500h28M12.500 7.500V4.500M28.500 7.500V4.500M4 26.500h14M12.500 20.500l6 6-6 6" strokeWidth={2} />
            </Glyph>
            <span className="ml-auto w-[192px]">01:37:35 (UTC+7)</span>
            <div className="ml-[28px] h-[39px] w-px bg-[#4a4c52]" />
            <span className="ml-[23px] w-[48px]">%</span>
            <span className="w-[57px]">log</span>
            <span className="mr-[18px] text-[#4163fb]">Auto</span>
          </div>
        </div>
        <div className="absolute left-[95px] top-[1012px] flex h-[46px] w-[15px] items-center justify-center rounded-[5px] bg-[#3a424b] text-[#c5c8ce]">
          <svg width="6" height="12" viewBox="0 0 6 12" fill="none" stroke="currentColor" strokeWidth="1.500"><path d="M5 1L1 6l4 5" /></svg>
        </div>
      </div>
    </section>
  );
}

// ── Order book ────────────────────────────────────────────────────────────

type Level = [price: string, qty: string, total: string, depth: number];

const ASKS: Level[] = [
  ['60.61', '1.853K', '19.317K', 19317],
  ['60.60', '2.236K', '17.464K', 17464],
  ['60.59', '2.592K', '15.228K', 15228],
  ['60.58', '2.209K', '12.636K', 12636],
  ['60.57', '1.661K', '10.426K', 10426],
  ['60.56', '2.526K', '8.765K', 8765],
  ['60.55', '2.389K', '6.239K', 6239],
  ['60.54', '2.180K', '3.850K', 3850],
  ['60.52', '228.76', '1.670K', 1670],
  ['60.50', '295.84', '1.441K', 1441],
  ['60.48', '295.74', '1.145K', 1145],
  ['60.46', '349.45', '849.21', 849],
  ['60.44', '241.15', '499.75', 500],
  ['60.42', '258.59', '258.59', 259],
];

const BIDS: Level[] = [
  ['60.35', '258.29', '258.29', 258],
  ['60.33', '241.32', '499.61', 500],
  ['60.31', '349.19', '848.81', 849],
  ['60.29', '295.42', '1.144K', 1144],
  ['60.27', '294.72', '1.439K', 1439],
  ['60.25', '227.74', '1.667K', 1667],
  ['60.23', '228.87', '1.896K', 1896],
  ['60.21', '234.21', '2.130K', 2130],
  ['60.19', '380.40', '2.510K', 2510],
  ['60.17', '209.39', '2.720K', 2720],
  ['60.15', '277.29', '2.997K', 2997],
  ['60.13', '288.02', '3.285K', 3285],
  ['60.11', '2.249K', '5.534K', 5534],
  ['60.10', '2.389K', '7.923K', 7923],
];

const MAX_DEPTH = 19317;

function Row({ level, side }: { level: Level; side: 'ask' | 'bid' }) {
  const [price, qty, total, depth] = level;
  return (
    <div className="relative mb-[1.73px] flex h-[35px] items-center pt-[1px] text-[20.4px] font-medium text-[#f3f4f6]">
      <div
        className={clsx('absolute inset-y-0 right-0', side === 'ask' ? 'bg-[#311f26]' : 'bg-[#1c2826]')}
        style={{ width: `${(depth / MAX_DEPTH) * 100}%` }}
      />
      <span className={clsx('relative w-[120px] font-normal', side === 'ask' ? 'text-[#ed5561]' : 'text-[#5ab573]')}>{price}</span>
      <span className="relative w-[229px] text-right">{qty}</span>
      <span className="relative flex-1 text-right">{total}</span>
    </div>
  );
}

// the four-bar glyphs that pick which side of the book is shown
function BookMode({ bars, active }: { bars: [string, number][]; active?: boolean }) {
  return (
    <div className={clsx('flex h-[42px] w-[41px] items-center justify-center rounded', active && 'bg-[#24272f]')}>
      <svg width="25" height="24" viewBox="0 0 25 24">
        {bars.map(([fill, w], i) => <rect key={i} x="0" y={1 + i * 6.3} width={w} height="3.200" fill={fill} />)}
      </svg>
    </div>
  );
}

const RED = '#e6515d';
const GREEN = '#5ab573';

function OrderBook() {
  return (
    <section className="flex h-full w-[624px] shrink-0 flex-col bg-[#111215]">
      <div className="flex h-[70px] shrink-0 overflow-hidden border-b border-[#24262c] pl-[28px]">
        <Tab active className="w-[175px] [&>div:last-child]:w-[135px]">Order Book</Tab>
        <Tab className="w-[211px]">Market Trades</Tab>
        <div className="flex w-[62px] items-center overflow-hidden bg-linear-to-r from-[#858a96] from-50% to-[#111215] bg-clip-text pt-[1px] text-[24.3px] font-medium text-transparent">
          Mark
        </div>
        <svg width="16" height="26" viewBox="0 0 16 26" fill="none" stroke="#747882" strokeWidth="2" className="ml-[12px] mt-[22px] shrink-0">
          <path d="M2 2l10 11L2 24" />
        </svg>
        <Glyph size={26} className="ml-[34px] mt-[22px] text-[#5d616a]">
          <g strokeWidth={1.6}><path d="M22 11V3q0-1-1-1H4Q3 2 3 3v20q0 1 1 1h8M8 7l6 6M14 7.500V13H8.500M15 16h7v8h-7z" /></g>
        </Glyph>
        <Sliders className="ml-auto mr-[20px] mt-[21px] size-[26px] shrink-0 text-[#5d616a]" />
      </div>

      <div className="flex min-h-0 flex-1 flex-col pl-[28px] pr-[21px] pt-[28px]">
        <div className="flex h-[42px] shrink-0 items-center gap-[15px]">
          <BookMode active bars={[[RED, 25], [RED, 20], [GREEN, 20], [GREEN, 25]]} />
          <BookMode bars={[[GREEN, 20], [GREEN, 20], [GREEN, 20], [GREEN, 25]]} />
          <BookMode bars={[[RED, 25], [RED, 20], [RED, 20], [RED, 20]]} />
          <div className="ml-auto flex h-[42px] w-[88px] items-center rounded-xl bg-[#24272f] pl-[13px] text-[20.5px] font-medium text-white">
            <span className="tracking-[-0.4px]">0.01</span>
            <Caret className="ml-auto mr-[10px] w-[13px] text-[#9296a1]" />
          </div>
        </div>
        <div className="mt-[19px] flex h-[26px] shrink-0 items-center text-[20.8px] text-[#858a96]">
          <span className="w-[122px]">Price(USDT)</span>
          <span className="w-[227px] text-right">Quantity(USDT)</span>
          <span className="flex-1 text-right">Total(USDT)</span>
        </div>

        <div className="mt-[15px] shrink-0">{ASKS.map(l => <Row key={l[0]} level={l} side="ask" />)}</div>

        <div className="flex h-[54px] shrink-0 items-center">
          <span className="text-[31px] font-semibold text-[#5ab573]">60.40</span>
          <svg width="16" height="22" viewBox="0 0 16 22" fill="none" stroke="#5ab573" strokeWidth="2.200" className="ml-[9px]">
            <path d="M8 21V2M1.500 8.500L8 2l6.500 6.500" />
          </svg>
          <span className="ml-[13px] border-b border-dotted border-[#5d616a] text-[20.4px] leading-[28px] text-[#858a96]">60.38</span>
        </div>

        <div className="shrink-0">{BIDS.map(l => <Row key={l[0]} level={l} side="bid" />)}</div>

        {/* Buy / sell ratio */}
        <div className="relative mt-[19px] flex h-[35px] shrink-0 text-[20.5px] font-medium text-white">
          <div className="flex w-[225px] items-center rounded-l bg-[#25352e] p-[2px] [clip-path:polygon(0_0,219px_0,225px_100%,0_100%)]">
            <span className="flex h-full w-[31px] items-center justify-center rounded-sm bg-[#111215]">B</span>
            <span className="flex-1 pr-[32px] text-center">39.2%</span>
          </div>
          <div className="flex w-[350px] items-center rounded-r bg-[#3c1f26] p-[2px] [clip-path:polygon(0_0,100%_0,100%_100%,6px_100%)]">
            <span className="flex-1 pl-[34px] text-center">60.8%</span>
            <span className="flex h-full w-[31px] items-center justify-center rounded-sm bg-[#111215]">S</span>
          </div>
          <div className="absolute left-[420px] top-[12px] flex items-center whitespace-nowrap font-['Noto_Sans',sans-serif] text-[24px] font-normal leading-[32px] text-[#c9cacc]">
            <svg width="28" height="28" viewBox="0 0 28 28" fill="currentColor">
              <path d="M14 1l6.500 6.500-2.700 2.700L14 6.400l-3.800 3.800-2.700-2.700zM3.800 11.200L6.600 14l-2.800 2.800L1 14zM24.200 11.200L27 14l-2.800 2.800-2.800-2.800zM14 11.200l2.800 2.800-2.800 2.800-2.800-2.800zM14 27l-6.500-6.500 2.700-2.700 3.800 3.800 3.800-3.800 2.700 2.700z" />
            </svg>
            <span className="ml-[6px]">@ ScalpingX</span>
          </div>
        </div>
      </div>
    </section>
  );
}

export default function App() {
  return (
    <div className="flex h-[1452px] w-[3188px] flex-col overflow-hidden bg-black font-['Inter',sans-serif] tabular-nums">
      <Header />
      <main className="ml-[7px] mt-[7px] flex min-h-0 flex-1 gap-[7px]">
        <ChartPanel />
        <OrderBook />
      </main>
    </div>
  );
}
